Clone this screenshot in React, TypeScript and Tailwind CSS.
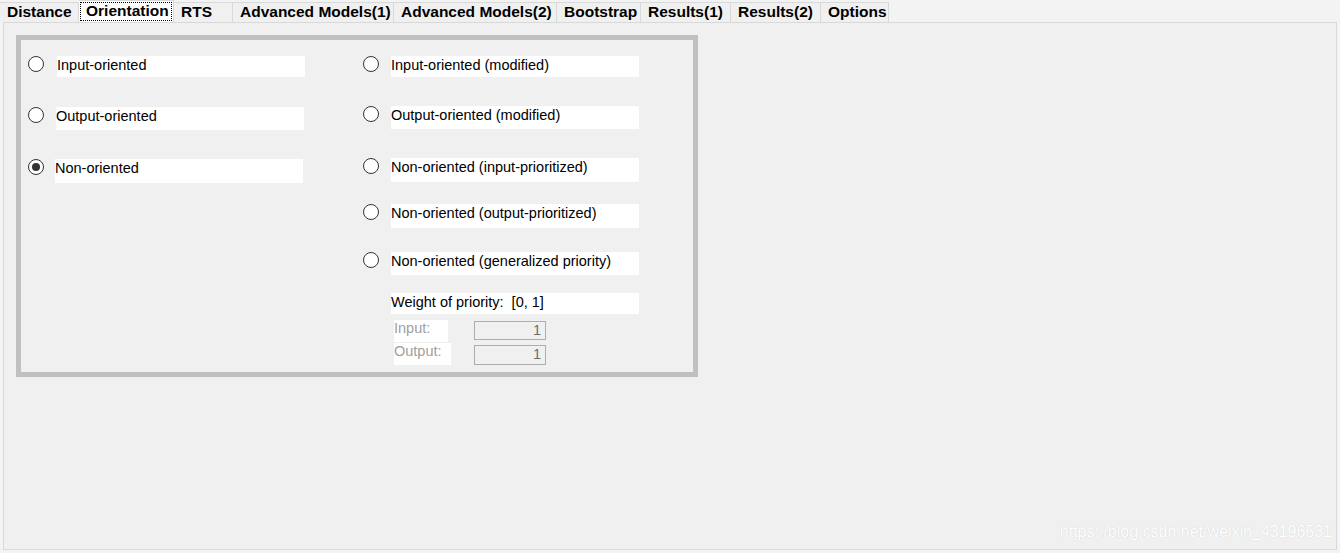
import React from "react";

const tabs = [
  { label: "Distance", w: "w-[79px]" },
  { label: "Orientation", w: "w-[95px]", active: true },
  { label: "RTS", w: "w-[59px]" },
  { label: "Advanced Models(1)", w: "w-[161px]" },
  { label: "Advanced Models(2)", w: "w-[163px]" },
  { label: "Bootstrap", w: "w-[84px]" },
  { label: "Results(1)", w: "w-[90px]" },
  { label: "Results(2)", w: "w-[90px]" },
  { label: "Options", w: "w-[68px]" },
];

function Radio({ checked = false }: { checked?: boolean }) {
  return (
    <div className="w-[16px] h-[16px] shrink-0 rounded-full border border-[#333333] bg-white flex items-center justify-center">
      {checked && <div className="w-[8px] h-[8px] rounded-full bg-[#333333]" />}
    </div>
  );
}

function Option({ label, checked, h, gap }: { label: string; checked?: boolean; h: string; gap: string }) {
  return (
    <div className="flex items-start">
      <Radio checked={checked} />
      <div className={`${gap} ${h} w-[248px] bg-white pt-[1px] leading-[16px] text-black whitespace-nowrap`}>
        {label}
      </div>
    </div>
  );
}

export default function App() {
  return (
    <div className="w-[1340px] h-[553px] overflow-hidden bg-[#f3f3f3] font-['Liberation_Sans',Arial,sans-serif] text-[14.5px]">
      {/* Tab strip */}
      <div className="flex h-[22px] items-end">
        {tabs.map((t) =>
          t.active ? (
            <div key={t.label} className={`${t.w} h-[22px] bg-white border-t border-r border-[#d9d9d9] p-[1px]`}>
              <div className="h-full border border-dotted border-black pl-[5px] font-bold text-[15.5px] leading-[16px] text-black">
                {t.label}
              </div>
            </div>
          ) : (
            <div
              key={t.label}
              className={`${t.w} h-[20px] bg-[#f0f0f0] border-t border-r border-[#d9d9d9] pl-[7px] font-bold text-[15.5px] leading-[18px] text-black whitespace-nowrap`}
            >
              {t.label}
            </div>
          )
        )}
      </div>

      {/* Tab panel */}
      <div className="ml-[3px] w-[1334px] h-[528px] border border-[#d9d9d9] bg-[#f0f0f0] pt-[12px] pl-[12px] flex flex-col justify-between">
        <div className="w-[682px] h-[342px] border-[5px] border-[#c0c0c0] flex pl-[7px]">
          {/* Left column */}
          <div className="w-[335px] pt-[16px] flex flex-col">
            <Option label="Input-oriented" h="h-[21px]" gap="ml-[13px]" />
            <div className="mt-[30px]">
              <Option label="Output-oriented" h="h-[23px]" gap="ml-[12px]" />
            </div>
            <div className="mt-[29px]">
              <Option label="Non-oriented" checked h="h-[24px]" gap="ml-[11px]" />
            </div>
          </div>

          {/* Right column */}
          <div className="pt-[16px] flex flex-col">
            <Option label="Input-oriented (modified)" h="h-[21px]" gap="ml-[12px]" />
            <div className="mt-[29px]">
              <Option label="Output-oriented (modified)" h="h-[23px]" gap="ml-[12px]" />
            </div>
            <div className="mt-[29px]">
              <Option label="Non-oriented (input-prioritized)" h="h-[24px]" gap="ml-[12px]" />
            </div>
            <div className="mt-[22px]">
              <Option label="Non-oriented (output-prioritized)" h="h-[24px]" gap="ml-[12px]" />
            </div>
            <div className="mt-[24px]">
              <Option label="Non-oriented (generalized priority)" h="h-[23px]" gap="ml-[12px]" />
            </div>

            <div className="ml-[28px] mt-[18px] w-[248px] h-[21px] bg-white pt-[1px] leading-[16px] text-black whitespace-pre">
              {"Weight of priority:  [0, 1]"}
            </div>

            <div className="ml-[31px] mt-[6px] flex items-start">
              <div className="w-[54px] h-[22px] bg-white leading-[16px] text-[#a0a0a0]">Input:</div>
              <div className="ml-[26px] mt-[1px] w-[72px] h-[19px] border border-[#adadad] bg-[#f0f0f0] pr-[4px] text-right leading-[16px] text-[#6d6d6d]">
                1
              </div>
            </div>
            <div className="ml-[31px] mt-[1px] flex items-start">
              <div className="w-[57px] h-[22px] bg-white leading-[16px] text-[#a0a0a0]">Output:</div>
              <div className="ml-[23px] mt-[2px] w-[72px] h-[20px] border border-[#adadad] bg-[#f0f0f0] pr-[4px] text-right leading-[17px] text-[#6d6d6d]">
                1
              </div>
            </div>
          </div>
        </div>

        {/* Watermark */}
        <div className="self-end mr-[4px] mb-[8px] text-[16px] leading-[18px] text-white [text-shadow:0_0_1px_#c8c8c8]">
          https://blog.csdn.net/weixin_43196531
        </div>
      </div>
    </div>
  );
}
